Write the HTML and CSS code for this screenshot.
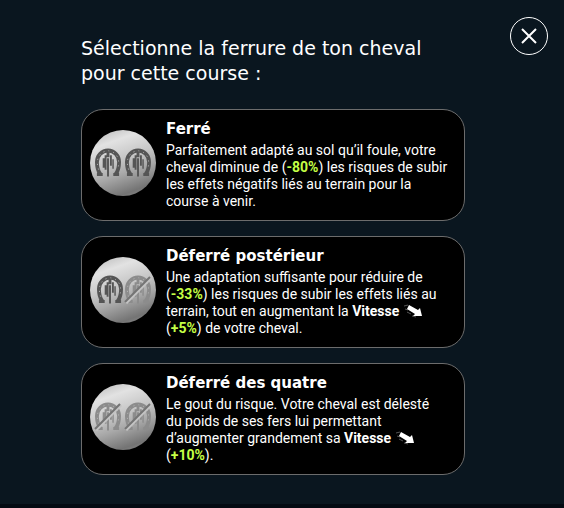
FILE: index.html
```html
<!DOCTYPE html>
<html lang="fr">
<head>
  <meta charset="UTF-8">
  <meta name="viewport" content="width=device-width, initial-scale=1">
  <title>Ferrure</title>
  <link rel="stylesheet" href="styles.css">
</head>
<body>
  <svg class="defs" width="0" height="0" aria-hidden="true">
    <defs>
      <symbol id="shoe" viewBox="0 0 27 29">
        <path d="M5.5 26.5C2 22 2 18 2 14a11.3 11.8 0 0 1 23 0c0 4 0 8-3.500 12.500" fill="none" stroke="currentColor" stroke-width="4"/>
        <path d="M2 27h6M19 27h6" stroke="currentColor" stroke-width="3"/>
        <path d="M4 22C2.500 19 2.500 17 2.500 14a11 11.500 0 0 1 22 0c0 3 0 5-1.500 8" fill="none" stroke="#b4b4b4" stroke-width="1" stroke-dasharray="1.200 4"/>
        <path d="M12 3h3v6h-3zM8 10h2v10H8zM10 7h2v15h-2zM12.500 10h2V29h-2zM15.500 7h2v11h-2zM18 11h1.500v10H18z" fill="currentColor"/>
      </symbol>
      <symbol id="arrow" viewBox="0 0 20 14">
        <path d="M1 2l4-1M2 5l3 1M4 8l4 2M9 12l4 1" stroke="#555" stroke-width="1"/>
        <path d="M6 1l9 5 2-2 2 8-9 0 2-2-8-5z" fill="#fff"/>
      </symbol>
    </defs>
  </svg>

  <main class="modal">
    <button class="close" type="button" aria-label="Fermer">
      <svg width="16" height="16" viewBox="0 0 16 16"><path d="M1 1l14 14M15 1L1 15"/></svg>
    </button>

    <h1>Sélectionne la ferrure de ton cheval pour cette course :</h1>

    <div class="choices">
      <button class="choice" type="button">
        <svg class="medal" viewBox="0 0 66 66" aria-hidden="true">
          <use href="#shoe" class="dark" x="5" y="18" width="26" height="29"/>
          <use href="#shoe" class="dark" x="35" y="18" width="26" height="29"/>
        </svg>
        <span class="text">
          <span class="title">Ferré</span>
          <span class="desc">Parfaitement adapté au sol qu’il foule, votre cheval diminue de (<b class="bonus">-80%</b>) les risques de subir les effets négatifs liés au terrain pour la course à venir.</span>
        </span>
      </button>

      <button class="choice" type="button">
        <svg class="medal" viewBox="0 0 66 66" aria-hidden="true">
          <use href="#shoe" class="dark" x="7" y="18" width="26" height="29"/>
          <use href="#shoe" class="light" x="35" y="18" width="26" height="29"/>
          <path class="gap" d="M36 46L61 21"/>
          <path class="slash" d="M35 45L60 20"/>
        </svg>
        <span class="text">
          <span class="title">Déferré postérieur</span>
          <span class="desc">Une adaptation suffisante pour réduire de (<b class="bonus">-33%</b>) les risques de subir les effets liés au terrain, tout en augmentant la <b>Vitesse</b> <svg class="arrow" aria-hidden="true"><use href="#arrow"/></svg> (<b class="bonus">+5%</b>) de votre cheval.</span>
        </span>
      </button>

      <button class="choice" type="button">
        <svg class="medal" viewBox="0 0 66 66" aria-hidden="true">
          <use href="#shoe" class="light" x="5" y="18" width="26" height="29"/>
          <use href="#shoe" class="light" x="35" y="18" width="26" height="29"/>
          <path class="gap" d="M6 46L31 21M36 46L61 21"/>
          <path class="slash" d="M5 45L30 20M35 45L60 20"/>
        </svg>
        <span class="text">
          <span class="title">Déferré des quatre</span>
          <span class="desc">Le gout du risque. Votre cheval est délesté<br>du poids de ses fers lui permettant<br>d’augmenter grandement sa <b>Vitesse</b> <svg class="arrow" aria-hidden="true"><use href="#arrow"/></svg><br>(<b class="bonus">+10%</b>).</span>
        </span>
      </button>
    </div>
  </main>
</body>
</html>
```

FILE: styles.css
```css
* {
  box-sizing: border-box;
}

body {
  margin: 0;
  background: #040a12;
  color: #fff;
  font-family: "Roboto", "Liberation Sans", sans-serif;
}

.defs {
  display: block;
}

.modal {
  position: relative;
  padding: 36px 99px 29px 81px;
  background: #0a161f;
}

.close {
  position: absolute;
  top: 17px;
  right: 16px;
  width: 38px;
  height: 38px;
  padding: 0;
  display: flex;
  align-items: center;
  justify-content: center;
  border: 1px solid #fff;
  border-radius: 50%;
  background: none;
  cursor: pointer;
}

.close path {
  stroke: #fff;
  stroke-width: 2;
}

h1 {
  margin: 0 0 23px;
  font-family: "DejaVu Sans", sans-serif;
  font-size: 19px;
  font-weight: 400;
  line-height: 25px;
}

.choices {
  display: flex;
  flex-direction: column;
  gap: 15px;
}

.choice {
  display: flex;
  align-items: center;
  gap: 10px;
  width: 100%;
  min-height: 112px;
  padding: 8px;
  border: 1px solid #6c6c6c;
  border-radius: 22px;
  background: #000;
  color: #fff;
  font: inherit;
  text-align: left;
  cursor: pointer;
}

.medal {
  flex: none;
  width: 66px;
  height: 66px;
  margin-bottom: 4px;
  border-radius: 50%;
  background: linear-gradient(160deg, #b4b4b4 0%, #e2e2e2 22%, #c6c6c6 45%, #a8a8a8 62%, #747474 85%, #969696 100%);
}

.dark {
  color: #555;
}

.light {
  color: #8c8c8c;
}

.gap {
  stroke: #c4c4c4;
  stroke-width: 3;
}

.slash {
  stroke: #747474;
  stroke-width: 2;
}

.title {
  display: block;
  margin-bottom: 3px;
  font-family: "DejaVu Sans", sans-serif;
  font-size: 15px;
  font-weight: 700;
  line-height: 19px;
}

.desc {
  display: block;
  font-size: 14px;
  line-height: 17px;
}

.bonus {
  color: #c4ff45;
}

.arrow {
  width: 20px;
  height: 14px;
  vertical-align: -2px;
}
```
